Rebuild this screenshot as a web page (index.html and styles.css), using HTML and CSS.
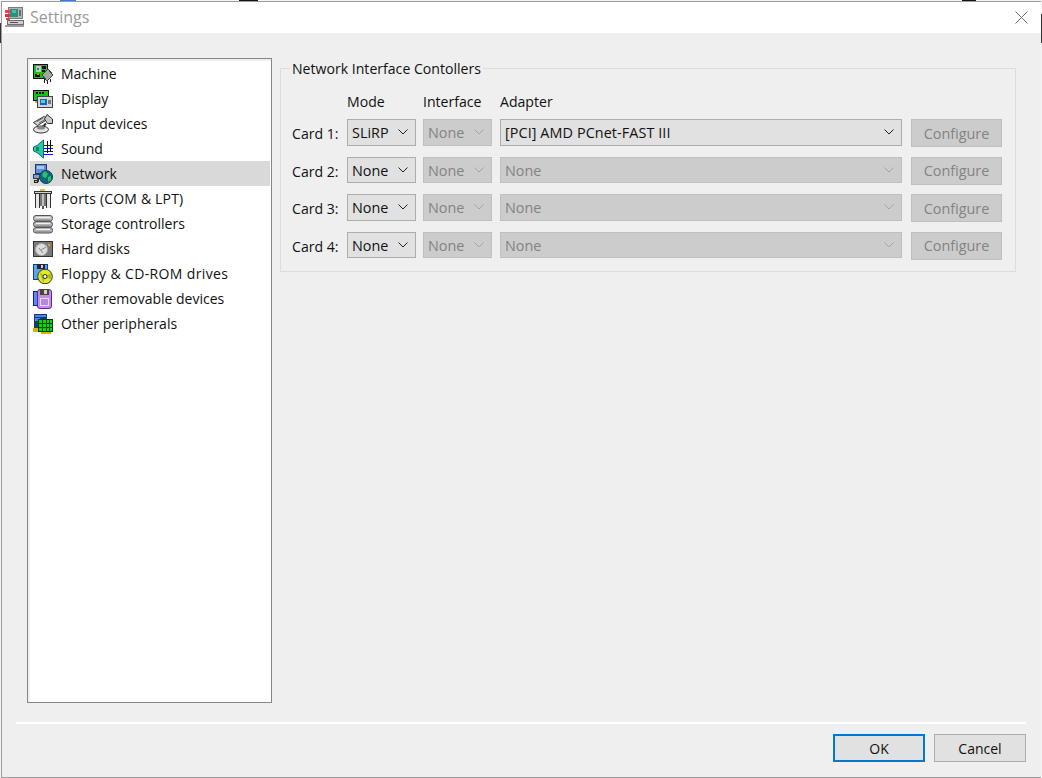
FILE: index.html
```html
<!DOCTYPE html>
<html>
  <head>
    <meta charset="utf-8" />
    <title>Settings</title>
    <link rel="stylesheet" href="styles.css">
  </head>
  <body>
    <!-- bits of the windows behind the dialog -->
    <span class="mark mark-a"></span>
    <span class="mark mark-b"></span>
    <span class="mark mark-c"></span>
    <span class="mark mark-d"></span>
    <span class="mark mark-e"></span>

    <div class="window">
      <div class="titlebar">
        <svg class="app-icon" viewBox="0 0 20 20" shape-rendering="crispEdges">
          <rect x="3" y="0" width="15" height="12" fill="#7a7a7a"/>
          <rect x="4" y="1" width="13" height="10" fill="#b5b5b5"/>
          <rect x="5" y="2" width="8" height="8" fill="#2f8f7f"/>
          <rect x="7" y="3" width="4" height="3" fill="#39c9a0"/>
          <rect x="14" y="3" width="2" height="6" fill="#6d6d6d"/>
          <rect x="0" y="3" width="5" height="3" fill="#d8504a"/>
          <rect x="0" y="7" width="5" height="3" fill="#c9403c"/>
          <rect x="1" y="11" width="4" height="2" fill="#d8504a"/>
          <rect x="2" y="13" width="17" height="5" fill="#6f6f6f"/>
          <rect x="3" y="14" width="15" height="3" fill="#cfcfcf"/>
          <rect x="5" y="15" width="8" height="1" fill="#555"/>
          <rect x="0" y="18" width="19" height="2" fill="#9b9b9b"/>
        </svg>
        <span class="window-title">Settings</span>
        <svg class="close-icon" viewBox="0 0 13 13"><path d="M0.5 0.5L12.5 12.5M12.5 0.5L0.5 12.5" stroke="#6e6e6e" fill="none"/></svg>
      </div>

      <div class="main">
        <div class="list">
          <ul class="list-inner">
            <li class="list-item">
              <svg class="item-icon" viewBox="0 0 20 20" shape-rendering="crispEdges">
                <rect x="0" y="0" width="15" height="15" fill="#111"/>
                <rect x="1" y="1" width="13" height="13" fill="#12c412"/>
                <rect x="3" y="2" width="5" height="6" fill="#c8c8c8"/>
                <rect x="4" y="4" width="2" height="2" fill="#6b6b6b"/>
                <rect x="9" y="2" width="4" height="3" fill="#111"/>
                <rect x="9" y="6" width="3" height="2" fill="#111"/>
                <rect x="2" y="10" width="5" height="3" fill="#111"/>
                <rect x="4" y="10" width="2" height="1" fill="#d8b400"/>
                <polygon points="15,5 20,11 14,17 9,11" fill="#a5a5a5" stroke="#444" stroke-width="1"/>
                <rect x="11" y="15" width="1" height="4" fill="#222"/>
                <rect x="14" y="17" width="1" height="3" fill="#222"/>
                <rect x="17" y="15" width="1" height="3" fill="#222"/>
              </svg>
              <span>Machine</span>
            </li>
            <li class="list-item">
              <svg class="item-icon" viewBox="0 0 20 20" shape-rendering="crispEdges">
                <rect x="0" y="1" width="16" height="11" fill="#111"/>
                <rect x="1" y="2" width="14" height="9" fill="#12c412"/>
                <rect x="3" y="3" width="2" height="2" fill="#111"/>
                <rect x="6" y="3" width="2" height="2" fill="#111"/>
                <rect x="9" y="3" width="2" height="2" fill="#111"/>
                <rect x="2" y="12" width="4" height="2" fill="#d8b400"/>
                <rect x="4" y="7" width="16" height="12" fill="#444"/>
                <rect x="5" y="8" width="14" height="10" fill="#d4d4d4"/>
                <rect x="7" y="10" width="7" height="6" fill="#1264c8"/>
                <rect x="8" y="11" width="4" height="3" fill="#5fc6f2"/>
                <rect x="15" y="11" width="3" height="4" fill="#777"/>
              </svg>
              <span>Display</span>
            </li>
            <li class="list-item">
              <svg class="item-icon" viewBox="0 0 20 20">
                <polygon points="0.5,8.5 11,2.5 15,5 4.5,11.5" fill="#d4d4d4" stroke="#333"/>
                <path d="M4 7.5l6-3.5M6 9l6-3.5" stroke="#666"/>
                <polygon points="14,0.5 19.5,5 19.5,9.5 14.5,9.5 11.5,5" fill="#c8c8c8" stroke="#333"/>
                <path d="M13 9.5l-3 3" stroke="#333" stroke-width="2"/>
                <ellipse cx="8" cy="15.5" rx="7.5" ry="3.5" fill="#e4e4e4" stroke="#333"/>
                <ellipse cx="8" cy="14" rx="4" ry="1.5" fill="#888"/>
              </svg>
              <span>Input devices</span>
            </li>
            <li class="list-item">
              <svg class="item-icon" viewBox="0 0 20 20">
                <polygon points="0.5,8 4,6.5 10.5,1 10.5,19 4,13.5 0.5,12" fill="#27c8a6" stroke="#0b6e68"/>
                <rect x="3" y="8" width="3" height="4" fill="#0f8a7a"/>
                <g shape-rendering="crispEdges">
                  <rect x="11" y="6" width="9" height="1" fill="#1010d0"/>
                  <rect x="11" y="9" width="9" height="1" fill="#1010d0"/>
                  <rect x="11" y="12" width="9" height="1" fill="#1010d0"/>
                  <rect x="11" y="15" width="9" height="1" fill="#1010d0"/>
                  <rect x="14" y="2" width="1" height="12" fill="#111"/>
                  <rect x="17" y="1" width="1" height="11" fill="#111"/>
                </g>
              </svg>
              <span>Sound</span>
            </li>
            <li class="list-item selected">
              <svg class="item-icon" viewBox="0 0 20 20">
                <g shape-rendering="crispEdges">
                  <rect x="2" y="0" width="12" height="10" fill="#1c3c78"/>
                  <rect x="3" y="1" width="10" height="8" fill="#5f8fd8"/>
                  <rect x="4" y="2" width="7" height="3" fill="#a9c8f0"/>
                  <rect x="0" y="10" width="13" height="5" fill="#1c3c78"/>
                  <rect x="1" y="11" width="11" height="3" fill="#9a9ab0"/>
                  <rect x="1" y="16" width="4" height="3" fill="#222"/>
                  <rect x="2" y="17" width="2" height="1" fill="#c8d820"/>
                  <rect x="4" y="14" width="2" height="4" fill="#333"/>
                </g>
                <circle cx="13" cy="13" r="6.5" fill="#0d6a78" stroke="#0c3c58"/>
                <path d="M9 10l3-3 3 3-2 4-3-1zM15 13l3-1 0 4-3 2z" fill="#2fbf6a"/>
              </svg>
              <span>Network</span>
            </li>
            <li class="list-item">
              <svg class="item-icon" viewBox="0 0 20 20" shape-rendering="crispEdges">
                <rect x="7" y="0" width="5" height="2" fill="#d8c450"/>
                <rect x="1" y="2" width="18" height="3" fill="#333"/>
                <rect x="2" y="3" width="16" height="1" fill="#d0d0d0"/>
                <rect x="2" y="5" width="5" height="14" fill="#333"/>
                <rect x="3" y="5" width="3" height="14" fill="#e8e8e8"/>
                <rect x="13" y="5" width="5" height="14" fill="#333"/>
                <rect x="14" y="5" width="3" height="14" fill="#e8e8e8"/>
                <rect x="7" y="5" width="6" height="12" fill="#777"/>
                <rect x="9" y="5" width="2" height="12" fill="#c0c0c0"/>
                <rect x="9" y="17" width="2" height="3" fill="#555"/>
              </svg>
              <span class="spaced-less">Ports (COM &amp; LPT)</span>
            </li>
            <li class="list-item">
              <svg class="item-icon" viewBox="0 0 20 20">
                <rect x="0.5" y="1.5" width="19" height="5.5" rx="2.5" fill="#c4c4c4" stroke="#555"/>
                <rect x="0.5" y="7.5" width="19" height="5.5" rx="2.5" fill="#b4b4b4" stroke="#555"/>
                <rect x="0.5" y="13.5" width="19" height="5.5" rx="2.5" fill="#b4b4b4" stroke="#555"/>
                <path d="M3 3.5h14M3 9.5h14M3 15.5h14" stroke="#f0f0f0"/>
                <path d="M3 6h14M3 12h14M3 18h14" stroke="#808080"/>
              </svg>
              <span>Storage controllers</span>
            </li>
            <li class="list-item">
              <svg class="item-icon" viewBox="0 0 20 20">
                <rect x="0.5" y="2.5" width="19" height="15" fill="#7a7a7a" stroke="#333"/>
                <circle cx="8.5" cy="10.5" r="6" fill="#dcdcdc" stroke="#aaa"/>
                <path d="M8 11l5-3M6 9l4 5" stroke="#888"/>
                <rect x="15" y="5" width="2" height="2" fill="#e8a020" shape-rendering="crispEdges"/>
              </svg>
              <span>Hard disks</span>
            </li>
            <li class="list-item">
              <svg class="item-icon" viewBox="0 0 20 20">
                <g shape-rendering="crispEdges">
                  <rect x="0" y="0" width="15" height="16" fill="#123c9c"/>
                  <rect x="1" y="1" width="13" height="14" fill="#5aa8e8"/>
                  <rect x="4" y="0" width="8" height="5" fill="#26262e"/>
                  <rect x="8" y="1" width="2" height="3" fill="#cfcfcf"/>
                </g>
                <circle cx="12" cy="12.5" r="7.3" fill="#e6e622" stroke="#333"/>
                <path d="M6.5 8l5.5 4.5-1.5 6.5zM18 9l-6 3.5 6 3" fill="#9ac81a"/>
                <circle cx="12" cy="12.5" r="2" fill="#fff" stroke="#222"/>
              </svg>
              <span class="spaced">Floppy &amp; CD-ROM drives</span>
            </li>
            <li class="list-item">
              <svg class="item-icon" viewBox="0 0 20 20">
                <g shape-rendering="crispEdges">
                  <rect x="0" y="2" width="7" height="15" fill="#1010d8"/>
                  <rect x="1" y="3" width="4" height="13" fill="#5a8af0"/>
                </g>
                <rect x="4.5" y="0.5" width="14" height="19" rx="2.5" fill="#c48ae8" stroke="#5a2d8c"/>
                <g shape-rendering="crispEdges">
                  <rect x="7" y="0" width="9" height="6" fill="#444"/>
                  <rect x="11" y="1" width="3" height="4" fill="#cfcfcf"/>
                  <rect x="7" y="9" width="9" height="8" fill="#e8d8f4"/>
                  <rect x="8" y="10" width="7" height="6" fill="#b48ad8"/>
                </g>
              </svg>
              <span>Other removable devices</span>
            </li>
            <li class="list-item">
              <svg class="item-icon" viewBox="0 0 20 20" shape-rendering="crispEdges">
                <rect x="1" y="0" width="13" height="14" fill="#123c78"/>
                <rect x="2" y="1" width="11" height="2" fill="#4a8ad8"/>
                <rect x="2" y="4" width="5" height="3" fill="#4a8ad8"/>
                <rect x="0" y="14" width="6" height="4" fill="#d8b400"/>
                <rect x="5" y="5" width="15" height="13" fill="#0a3a0a"/>
                <rect x="6" y="6" width="13" height="11" fill="#12d012"/>
                <path d="M9 6h1v11H9zM13 6h1v11h-1zM16 6h1v11h-1zM6 9h13v1H6zM6 13h13v1H6z" fill="#064a06"/>
                <rect x="8" y="18" width="10" height="2" fill="#d8b400"/>
              </svg>
              <span>Other peripherals</span>
            </li>
          </ul>
        </div>

        <fieldset class="group">
          <legend>Network Interface Contollers</legend>
          <div class="card-grid">
            <div></div>
            <div class="col-head">Mode</div>
            <div class="col-head">Interface</div>
            <div class="col-head">Adapter</div>
            <div></div>

            <div class="card-label">Card 1:</div>
            <div class="combo small"><span>SLiRP</span><svg viewBox="0 0 10 6"><path d="M0.5 0.5L5 5L9.5 0.5"/></svg></div>
            <div class="combo small disabled"><span>None</span><svg viewBox="0 0 10 6"><path d="M0.5 0.5L5 5L9.5 0.5"/></svg></div>
            <div class="combo wide"><span class="spaced">[PCI] AMD PCnet-FAST III</span><svg viewBox="0 0 10 6"><path d="M0.5 0.5L5 5L9.5 0.5"/></svg></div>
            <button class="configure" disabled>Configure</button>

            <div class="card-label">Card 2:</div>
            <div class="combo small"><span>None</span><svg viewBox="0 0 10 6"><path d="M0.5 0.5L5 5L9.5 0.5"/></svg></div>
            <div class="combo small disabled"><span>None</span><svg viewBox="0 0 10 6"><path d="M0.5 0.5L5 5L9.5 0.5"/></svg></div>
            <div class="combo wide disabled"><span>None</span><svg viewBox="0 0 10 6"><path d="M0.5 0.5L5 5L9.5 0.5"/></svg></div>
            <button class="configure" disabled>Configure</button>

            <div class="card-label">Card 3:</div>
            <div class="combo small"><span>None</span><svg viewBox="0 0 10 6"><path d="M0.5 0.5L5 5L9.5 0.5"/></svg></div>
            <div class="combo small disabled"><span>None</span><svg viewBox="0 0 10 6"><path d="M0.5 0.5L5 5L9.5 0.5"/></svg></div>
            <div class="combo wide disabled"><span>None</span><svg viewBox="0 0 10 6"><path d="M0.5 0.5L5 5L9.5 0.5"/></svg></div>
            <button class="configure" disabled>Configure</button>

            <div class="card-label">Card 4:</div>
            <div class="combo small"><span>None</span><svg viewBox="0 0 10 6"><path d="M0.5 0.5L5 5L9.5 0.5"/></svg></div>
            <div class="combo small disabled"><span>None</span><svg viewBox="0 0 10 6"><path d="M0.5 0.5L5 5L9.5 0.5"/></svg></div>
            <div class="combo wide disabled"><span>None</span><svg viewBox="0 0 10 6"><path d="M0.5 0.5L5 5L9.5 0.5"/></svg></div>
            <button class="configure" disabled>Configure</button>
          </div>
        </fieldset>
      </div>

      <div class="separator"></div>

      <div class="footer">
        <button class="dialog-btn default">OK</button>
        <button class="dialog-btn">Cancel</button>
      </div>
    </div>
  </body>
</html>
```

FILE: styles.css
```css
* {
  margin: 0;
  padding: 0;
  box-sizing: border-box;
}

html,
body {
  width: 100%;
  height: 100%;
  overflow: hidden;
}

body {
  position: relative;
  background: #f4f4f4;
  font-family: "Open Sans", "Noto Sans", sans-serif;
  font-size: 14px;
  color: #111;
}

.mark {
  position: absolute;
  display: block;
}

.mark-a {
  left: 60px;
  top: 0;
  width: 16px;
  height: 1px;
  background: #3a7bd5;
}

.mark-b {
  left: 239px;
  top: 0;
  width: 19px;
  height: 1px;
  background: #111;
}

.mark-c {
  left: 962px;
  top: 0;
  width: 14px;
  height: 1px;
  background: #111;
}

.mark-d {
  left: 0;
  top: 23px;
  width: 1px;
  height: 20px;
  background: #333;
}

.mark-e {
  right: 0;
  top: 14px;
  width: 1px;
  height: 29px;
  background: #333;
}

.window {
  position: absolute;
  left: 1px;
  top: 1px;
  width: 1040px;
  height: 777px;
  display: flex;
  flex-direction: column;
  background: #efefef;
  border-top: 1px solid #9c9c9c;
  border-left: 1px solid #9c9c9c;
  border-bottom: 1px solid #9c9c9c;
}

.titlebar {
  height: 31px;
  flex-shrink: 0;
  display: flex;
  align-items: center;
  padding: 0 13px 1px 3px;
  background: #fff;
}

.app-icon {
  width: 20px;
  height: 20px;
  margin-right: 5px;
}

.window-title {
  flex: 1;
  font-size: 16px;
  color: #999;
}

.close-icon {
  width: 13px;
  height: 13px;
}

.main {
  flex: 1;
  min-height: 0;
  display: flex;
  align-items: flex-start;
  gap: 8px;
  padding: 25px 25px 19px;
}

.list {
  width: 245px;
  height: 100%;
  flex-shrink: 0;
  border: 1px solid #828790;
  background: #fff;
}

.list-inner {
  height: 100%;
  list-style: none;
  border-top: 2px solid #f0f0f0;
  border-left: 2px solid #f0f0f0;
  padding-right: 1px;
}

.list-item {
  height: 25px;
  display: flex;
  align-items: center;
  gap: 8px;
  padding-left: 3px;
}

.list-item.selected {
  background: #d9d9d9;
}

.list-item .spaced {
  letter-spacing: 0.36px;
}

.list-item .spaced-less {
  letter-spacing: 0.18px;
}

.item-icon {
  width: 20px;
  height: 20px;
  flex-shrink: 0;
}

.group {
  flex: 1;
  min-width: 0;
  border: 1px solid #dcdcdc;
  padding: 0 13px 11px 11px;
  font-size: 14.1px;
}

.group legend {
  margin-left: -2px;
  padding: 1px 2px 0;
  line-height: 20px;
}

.card-grid {
  display: grid;
  grid-template-columns: 55px 76px 77px 411px 91px;
  grid-template-rows: 18.5px 28px 28px 28px 28px;
  row-gap: 9.5px;
  padding-top: 12px;
}

.col-head {
  line-height: 21px;
}

.card-label {
  line-height: 29px;
}

.combo {
  height: 26.5px;
  display: flex;
  align-items: center;
  justify-content: space-between;
  padding: 1px 7px 0 4px;
  font-size: 14.4px;
  background: #e1e1e1;
  border: 1px solid #adadad;
}

.combo.small {
  width: 69px;
}

.combo.wide {
  width: 402px;
}

.combo .spaced {
  letter-spacing: 0.08px;
}

.combo svg {
  width: 10px;
  height: 6px;
  margin-top: -1px;
  fill: none;
  stroke: #222;
}

.combo.disabled {
  background: #ccc;
  border-color: #bfbfbf;
  color: #838383;
}

.combo.disabled svg {
  stroke: #a4a4a4;
}

.configure {
  height: 28px;
  font-family: inherit;
  font-size: 14.4px;
  color: #838383;
  background: #ccc;
  border: 1px solid #bfbfbf;
}

.separator {
  height: 2px;
  flex-shrink: 0;
  margin: 0 15px 0 14px;
  background: #fff;
}

.footer {
  flex-shrink: 0;
  display: flex;
  justify-content: flex-end;
  gap: 9px;
  padding: 10px 15px 15px 0;
}

.dialog-btn {
  width: 92px;
  height: 28px;
  font: inherit;
  color: #111;
  background: #e1e1e1;
  border: 1px solid #adadad;
}

.dialog-btn.default {
  border: 2px solid #0078d7;
}
```
